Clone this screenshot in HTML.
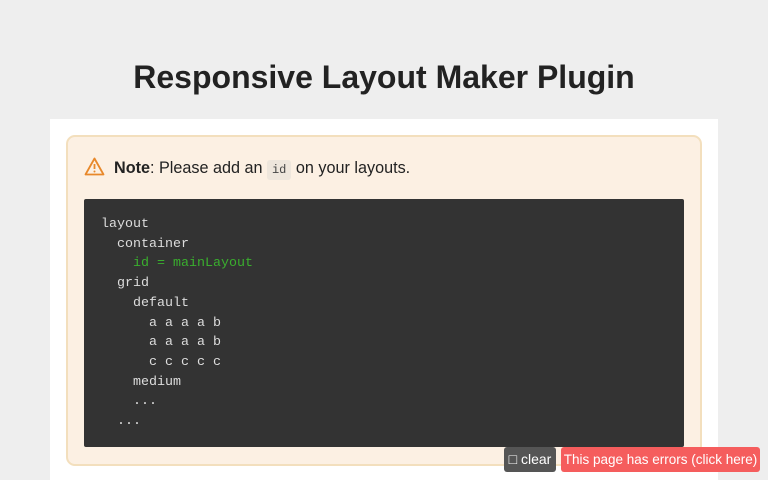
<!DOCTYPE html>
<html><head><style>
body{margin:0;width:768px;height:480px;background:#eee;font-family:"Liberation Sans",sans-serif;overflow:hidden;position:relative}
h1{margin:0;position:absolute;top:59px;left:0;width:768px;text-align:center;font-size:32px;font-weight:bold;color:#222}
.card{position:absolute;left:50px;top:119px;width:668px;height:361px;background:#fff}
.note{position:absolute;left:66px;top:135px;width:636px;height:331px;background:#fcf0e3;border:2px solid #f3dfbd;border-radius:9px;box-sizing:border-box}
.msg{position:absolute;left:114px;top:159px;font-size:16.2px;color:#222;white-space:nowrap}
.msg code{font-family:"Liberation Mono",monospace;font-size:12px;background:#eee6dc;padding:3px 5px;border-radius:3px;color:#444}
.warn{position:absolute;left:84px;top:157px}
pre{position:absolute;left:84px;top:199px;width:600px;height:248px;margin:0;background:#333;color:#ddd;font-family:"Liberation Mono",monospace;font-size:13.33px;line-height:19.7px;padding:16px 17px;box-sizing:border-box;border-radius:2px}
.g{color:#3aae2e}
.clear{position:absolute;left:504px;top:447px;width:52px;height:25px;background:#555;color:#fff;font-size:14px;line-height:25px;text-align:center;border-radius:3px;white-space:nowrap}
.err{position:absolute;left:561px;top:447px;width:199px;height:25px;background:#f55d5d;color:#fff;font-size:13.5px;line-height:25px;text-align:center;border-radius:3px;white-space:nowrap}
</style></head><body>
<h1>Responsive Layout Maker Plugin</h1>
<div class="card"></div>
<div class="note"></div>
<svg class="warn" width="21" height="19" viewBox="0 0 21 19"><path d="M10.5 1.5L1.5 17.5H19.5Z" fill="none" stroke="#e8882a" stroke-width="1.8" stroke-linejoin="round"/><path d="M10.5 7v5" stroke="#e8882a" stroke-width="1.8"/><circle cx="10.5" cy="14.5" r="1" fill="#e8882a"/></svg>
<div class="msg"><b>Note</b>: Please add an <code>id</code> on your layouts.</div>
<pre>layout
  container
    <span class="g">id = mainLayout</span>
  grid
    default
      a a a a b
      a a a a b
      c c c c c
    medium
    ...
  ...</pre>
<div class="clear">&#9633; clear</div>
<div class="err">This page has errors (click here)</div>
</body></html>
